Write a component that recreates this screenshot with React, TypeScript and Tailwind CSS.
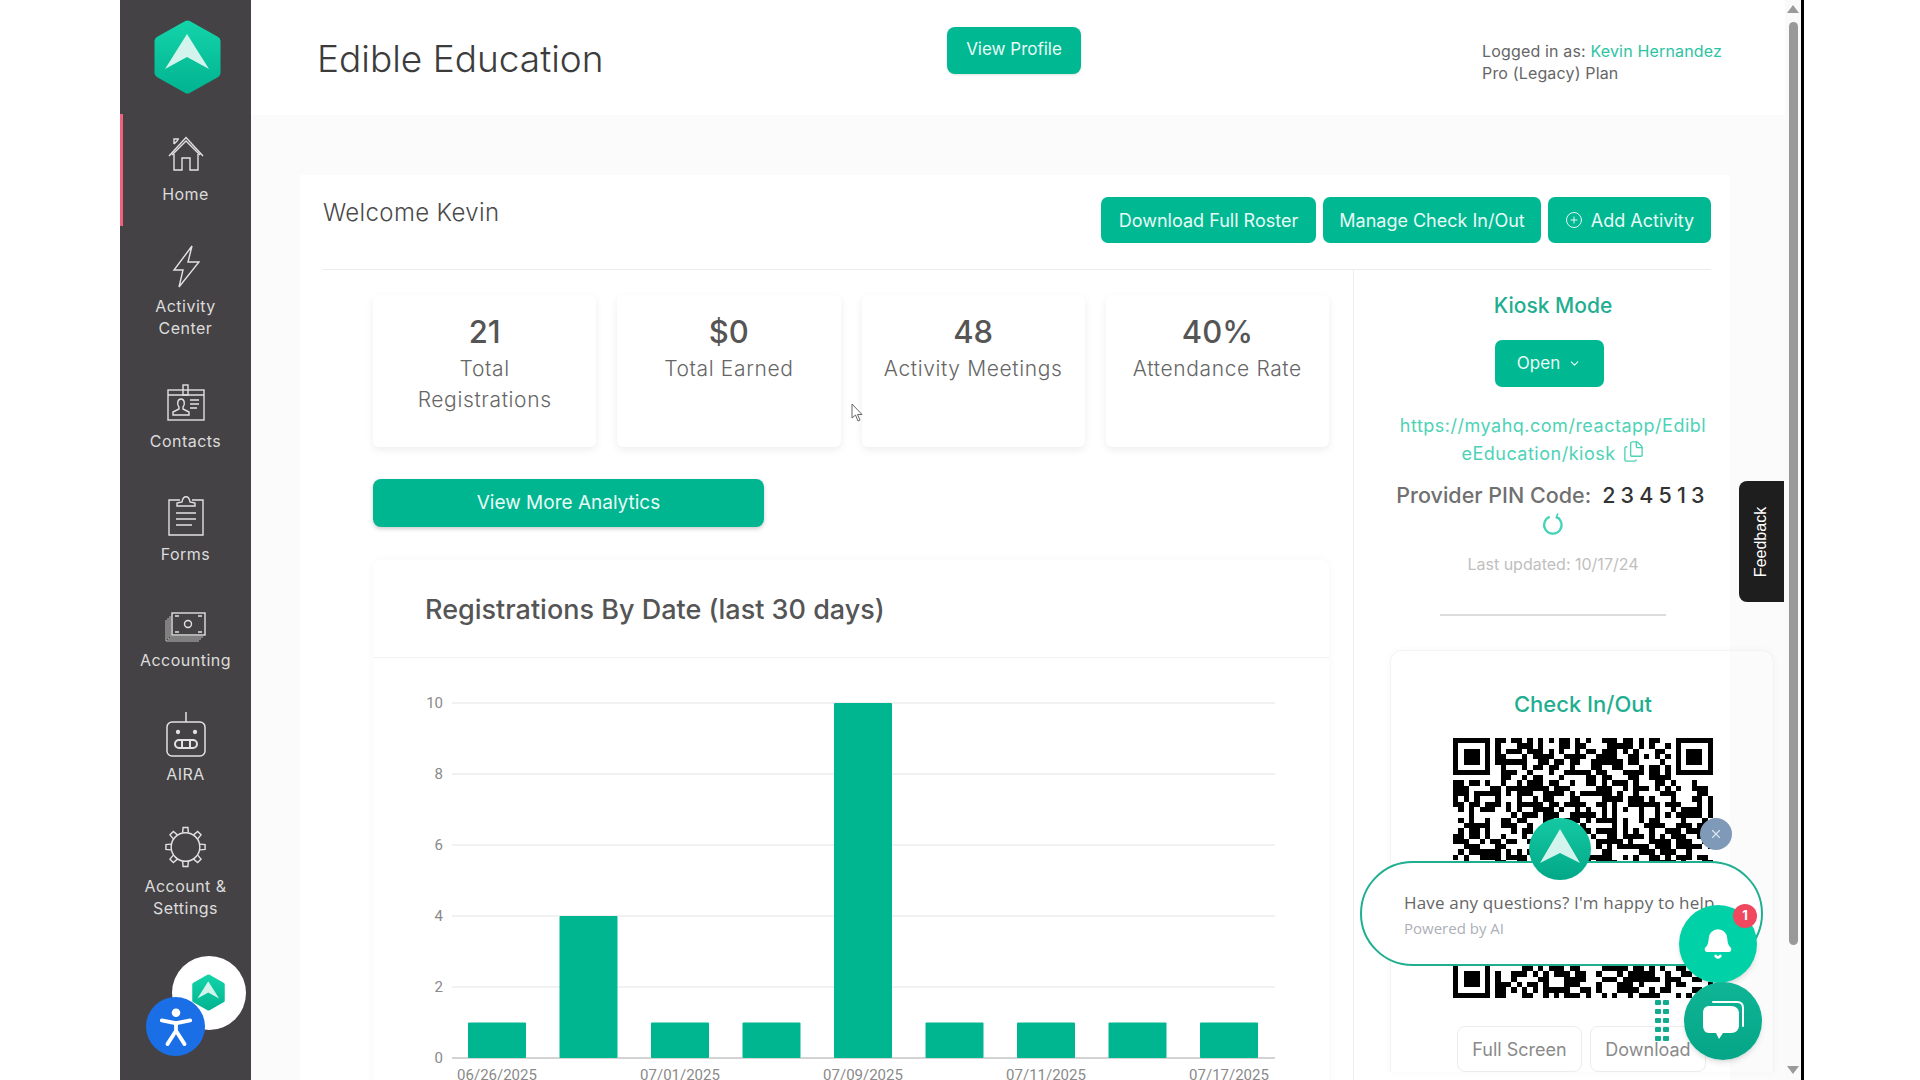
import { Bell, ChevronDown, CirclePlus, Files, X } from 'lucide-react';

const Logo = ({ className }: { className: string }) => (
  <svg viewBox="0 0 67 74" className={className}>
    <defs>
      <linearGradient id="hexFill" x1="0" y1="0" x2="0" y2="1">
        <stop offset="0" stopColor="#12d2a8" />
        <stop offset="1" stopColor="#02b592" />
      </linearGradient>
    </defs>
    <polygon
      points="33.5,5 62,21 62,53 33.5,69 5,53 5,21"
      fill="url(#hexFill)"
      stroke="url(#hexFill)"
      strokeWidth="9"
      strokeLinejoin="round"
    />
    <polygon points="33,14 55,49 33,37 11,49" fill="#d3f4ec" />
  </svg>
);

const HomeIcon = () => (
  <svg viewBox="0 0 36 36" className="h-[36px] w-[36px]" fill="none" stroke="#e2e2e2" strokeWidth="1.4">
    <path d="M1 20 L18 1.5 L35 20 M4 19 L18 5 L32 19" />
    <path d="M6 8 V3 H11 M6 8 L10 4" />
    <path d="M6 18 V34 H14 V22 H22 V34 H30 V18" />
  </svg>
);

const BoltIcon = () => (
  <svg viewBox="0 0 28 43" className="h-[43px] w-[28px]" fill="none" stroke="#e2e2e2" strokeWidth="1.4">
    <path d="M20 1 L2 25 H11 L7 42 L27 17 H16 Z" />
  </svg>
);

const ContactsIcon = () => (
  <svg viewBox="0 0 38 37" className="h-[37px] w-[38px]" fill="none" stroke="#e2e2e2" strokeWidth="1.4">
    <rect x="1" y="6" width="36" height="30" />
    <rect x="16" y="1" width="5" height="10" />
    <path d="M1 11 H37" />
    <path d="M6 31 V28 L12 25 V23 C10 21 10 15 14 15 C18 15 18 21 16 23 V25 L22 28 V31 Z" />
    <path d="M23 16 H32 M23 20 H32 M23 24 H30" />
  </svg>
);

const FormsIcon = () => (
  <svg viewBox="0 0 36 41" className="h-[41px] w-[36px]" fill="none" stroke="#e2e2e2" strokeWidth="1.4">
    <path d="M12 5 H1 V40 H35 V5 H24" />
    <path d="M9 11 H27 V8 L22 7 C21 0 15 0 14 7 L9 8 Z" />
    <path d="M8 18 H28 M8 24 H28 M8 30 H24" />
  </svg>
);

const MoneyIcon = () => (
  <svg viewBox="0 0 41 30" className="h-[30px] w-[41px]" fill="none" stroke="#e2e2e2" strokeWidth="1.4">
    <rect x="7" y="1" width="33" height="22" />
    <circle cx="23" cy="12" r="3.5" />
    <path d="M10 4 H14 M33 4 H37 M10 20 H14 M33 20 H37" />
    <path d="M5 4 V25 H38 M3 6 V27 H36 M1 8 V29 H34" stroke="#bdbdbd" strokeWidth="1" />
  </svg>
);

const RobotIcon = () => (
  <svg viewBox="0 0 40 45" className="h-[45px] w-[40px]" fill="none" stroke="#e2e2e2" strokeWidth="1.5">
    <path d="M20 0 V10" />
    <rect x="1" y="10" width="38" height="34" rx="5" />
    <circle cx="12" cy="20" r="1.4" fill="#e2e2e2" />
    <circle cx="29" cy="20" r="1.4" fill="#e2e2e2" />
    <rect x="9" y="28" width="22" height="8" rx="4" strokeWidth="2" />
    <path d="M16 28 V36 M24 28 V36" strokeWidth="2" />
  </svg>
);

const GearIcon = () => (
  <svg viewBox="0 0 44 44" className="h-[42px] w-[43px]" fill="none" stroke="#e2e2e2" strokeWidth="1.5">
    <circle cx="22" cy="22" r="15" />
    {[0, 45, 90, 135, 180, 225, 270, 315].map((a) => (
      <path key={a} d="M19 7 L19.5 1.5 H24.5 L25 7" transform={`rotate(${a} 22 22)`} />
    ))}
  </svg>
);

const navItems = [
  { label: ['Home'], icon: <HomeIcon />, box: 'h-[112px] pt-[22px] shadow-[inset_3px_0_0_#f0607f]', gap: 'mt-[11px]' },
  { label: ['Activity', 'Center'], icon: <BoltIcon />, box: 'h-[140px] pt-[19px]', gap: 'mt-[7px]' },
  { label: ['Contacts'], icon: <ContactsIcon />, box: 'h-[110px] pt-[18px]', gap: 'mt-[9px]' },
  { label: ['Forms'], icon: <FormsIcon />, box: 'h-[120px] pt-[19px]', gap: 'mt-[7px]' },
  { label: ['Accounting'], icon: <MoneyIcon />, box: 'h-[112px] pt-[16px]', gap: 'mt-[7px]' },
  { label: ['AIRA'], icon: <RobotIcon />, box: 'h-[113px] pt-[4px]', gap: 'mt-[6px]' },
  { label: ['Account &', 'Settings'], icon: <GearIcon />, box: 'h-[110px] pt-[5px]', gap: 'mt-[7px]' },
];

const stats = [
  { value: '21', label: ['Total', 'Registrations'] },
  { value: '$0', label: ['Total Earned'] },
  { value: '48', label: ['Activity Meetings'] },
  { value: '40%', label: ['Attendance Rate'] },
];

const bars = [1, 4, 1, 1, 10, 1, 1, 1, 1];
const xLabels = ['06/26/2025', '07/01/2025', '07/09/2025', '07/11/2025', '07/17/2025'];

// fake QR matrix, just needs to read as a code
const QR_SIZE = 49;
const inFinder = (x: number, y: number, ox: number, oy: number) =>
  x >= ox - 1 && x <= ox + 7 && y >= oy - 1 && y <= oy + 7;

const qrCell = (x: number, y: number) => {
  const origins = [
    [0, 0],
    [QR_SIZE - 7, 0],
    [0, QR_SIZE - 7],
  ];
  for (const [ox, oy] of origins) {
    if (inFinder(x, y, ox, oy)) {
      const dx = x - ox;
      const dy = y - oy;
      if (dx < 0 || dy < 0 || dx > 6 || dy > 6) return false;
      if (dx === 0 || dy === 0 || dx === 6 || dy === 6) return true;
      return dx >= 2 && dx <= 4 && dy >= 2 && dy <= 4;
    }
  }
  const h = Math.sin(x * 12.9898 + y * 78.233 + (x >> 2) * 3.1 + (y >> 2) * 5.7) * 43758.5453;
  return h - Math.floor(h) > 0.47;
};

const QrCode = () => {
  const cells: { x: number; y: number }[] = [];
  for (let y = 0; y < QR_SIZE; y++) {
    for (let x = 0; x < QR_SIZE; x++) {
      if (qrCell(x, y)) cells.push({ x, y });
    }
  }
  return (
    <svg viewBox={`0 0 ${QR_SIZE} ${QR_SIZE}`} className="h-[262px] w-[260px]" shapeRendering="crispEdges">
      {cells.map((c) => (
        <rect key={`${c.x}-${c.y}`} x={c.x} y={c.y} width="1" height="1" fill="#000" />
      ))}
    </svg>
  );
};

const Sidebar = () => (
  <aside className="relative w-[131px] shrink-0 bg-[#444245]">
    <div className="flex h-[114px] justify-center pt-[20px]">
      <Logo className="ml-[4px] h-[74px] w-[67px]" />
    </div>
    {navItems.map((item) => (
      <div key={item.label[0]} className={`flex flex-col items-center ${item.box}`}>
        {item.icon}
        <div className={`text-center text-[16px] leading-[22px] tracking-[0.03em] text-[#dcdcdc] ${item.gap}`}>
          {item.label.map((l) => (
            <div key={l}>{l}</div>
          ))}
        </div>
      </div>
    ))}
    {/* floating widgets */}
    <div className="absolute left-[52px] top-[956px] flex h-[74px] w-[74px] items-center justify-center rounded-full bg-white">
      <Logo className="mb-[2px] mr-[2px] h-[37px] w-[33px]" />
    </div>
    <div className="absolute left-[26px] top-[997px] flex h-[59px] w-[59px] items-center justify-center rounded-full bg-[#1a6fe6]">
      <svg viewBox="0 0 40 44" className="h-[42px] w-[38px]" fill="none" stroke="#fff" strokeWidth="4" strokeLinecap="round">
        <circle cx="20" cy="7" r="4.5" fill="#fff" stroke="none" />
        <path d="M5 15 L20 18 L35 15" />
        <path d="M20 18 V26 L11 40 M20 26 L29 40" />
      </svg>
    </div>
  </aside>
);

const Header = () => (
  <header className="flex h-[115px] shrink-0 bg-white">
    <div className="w-[696px] pl-[66px] pt-[36px] text-[37px] font-light leading-[46px] text-[#3c3c3c]">
      Edible Education
    </div>
    <button className="mt-[27px] h-[47px] w-[134px] rounded-[8px] bg-[#00b892] pb-[2px] text-[17px] text-[#e8fbf6] shadow-sm">
      View Profile
    </button>
    <div className="ml-[401px] pt-[40px] text-[16px] leading-[22px] tracking-[0.01em] text-[#666]">
      <div>
        Logged in as: <span className="text-[#2cc3a3]">Kevin Hernandez</span>
      </div>
      <div>Pro (Legacy) Plan</div>
    </div>
  </header>
);

const GreenButton = ({ width, children }: { width: string; children: React.ReactNode }) => (
  <button className={`flex h-[46px] items-center justify-center gap-[8px] rounded-[7px] bg-[#00b892] text-[18px] text-[#e8fbf6] ${width}`}>
    {children}
  </button>
);

const Chart = () => (
  <svg width="957" height="430" className="block [font-family:Roboto,sans-serif]">
    {[10, 8, 6, 4, 2, 0].map((v, i) => {
      const y = 45 + i * 71;
      return (
        <g key={v}>
          <line x1="79" x2="902" y1={y} y2={y} stroke={v === 0 ? '#a8a8a8' : '#ececee'} strokeWidth={v === 0 ? 1.2 : 1.5} />
          <text x="70" y={y + 5} textAnchor="end" fontSize="15" fill="#8a8a8a">
            {v}
          </text>
        </g>
      );
    })}
    {bars.map((v, i) => {
      const h = v * 35.5;
      return <rect key={i} x={95 + i * 91.5} y={400 - h} width="58" height={h} rx="1" fill="#00b690" />;
    })}
    {xLabels.map((l, i) => (
      <text key={l} x={124 + i * 183} y={422} textAnchor="middle" fontSize="15" fill="#8a8a8a">
        {l}
      </text>
    ))}
  </svg>
);

const KioskColumn = () => (
  <div className="w-[398px] shrink-0">
    <div className="flex flex-col items-center pt-[22px]">
      <div className="text-[21px] font-medium leading-[28px] text-[#1fae90]">Kiosk Mode</div>
      <button className="ml-[-8px] mt-[20px] flex h-[47px] w-[109px] items-center justify-center gap-[8px] rounded-[7px] bg-[#00b892] text-[17px] text-[#e8fbf6]">
        Open <ChevronDown size={13} />
      </button>
      <div className="mt-[25px] text-center text-[18px] leading-[28px] tracking-[0.028em] text-[#4ed2b6]">
        <div>https://myahq.com/reactapp/Edibl</div>
        <div className="flex items-center justify-center gap-[6px]">
          eEducation/kiosk <Files size={23} strokeWidth={1.4} className="mb-[5px]" />
        </div>
      </div>
      <div className="mt-[13px] flex items-center gap-[11px] text-[21.5px] font-medium leading-[28px] text-[#707070]">
        <span>Provider PIN Code:</span>
        <span className="tracking-[0.24em] text-[#333]">234513</span>
      </div>
      <svg viewBox="0 0 22 22" className="mt-[4px] h-[24px] w-[24px]" fill="none" stroke="#43d3b6" strokeWidth="2">
        <path d="M8 3.5 A8 8 0 1 0 14 3.6" />
        <path d="M15.5 0.5 L14 4 L17.5 5" strokeWidth="1.5" />
      </svg>
      <div className="mt-[17px] text-[16px] leading-[20px] text-[#c0c0c0]">Last updated: 10/17/24</div>
      <div className="mt-[40px] h-[2px] w-[226px] bg-[#dcdcdc]" />
    </div>
    <div className="ml-[36px] mt-[34px] w-[384px] rounded-t-[12px] border border-b-0 border-[#f3f3f3] shadow-[0_0_8px_rgba(0,0,0,0.03)]">
      <div className="flex flex-col items-center pt-[38px]">
        <div className="ml-[2px] text-[22px] font-medium leading-[30px] text-[#1fae90]">Check In/Out</div>
        <div className="ml-[2px] mt-[18px]">
          <QrCode />
        </div>
        <div className="ml-[10px] mt-[27px] flex w-[260px] gap-[8px]">
          <button className="h-[46px] w-[125px] shrink-0 rounded-[8px] border border-[#ececec] text-[18px] text-[#8a8a8a]">Full Screen</button>
          <button className="h-[46px] w-[116px] shrink-0 rounded-[8px] border border-[#ececec] text-[18px] text-[#8a8a8a]">Download</button>
        </div>
      </div>
    </div>
  </div>
);

const ChatOverlay = () => (
  <>
    <div className="absolute left-[1109px] top-[861px] h-[105px] w-[403px] rounded-full border-2 border-[#1fae90] bg-white pl-[42px] pt-[28px] [font-family:'Open_Sans',sans-serif]">
      <div className="whitespace-nowrap text-[17px] leading-[24px] tracking-[0.01em] text-[#666]">Have any questions? I'm happy to help</div>
      <div className="mt-[3px] text-[15px] leading-[20px] text-[#adb0b8]">Powered by AI</div>
    </div>
    <div className="absolute left-[1278px] top-[818px] flex h-[62px] w-[62px] items-center justify-center rounded-full bg-gradient-to-b from-[#14c9a3] to-[#02a888]">
      <svg viewBox="0 0 44 40" className="mb-[4px] h-[40px] w-[44px]">
        <polygon points="22,2 42,36 22,26 2,36" fill="#d3f4ec" />
      </svg>
    </div>
    <div className="absolute left-[1449px] top-[818px] flex h-[32px] w-[32px] items-center justify-center rounded-full bg-[#7f9ab8]">
      <X size={14} className="text-[#dbe6f3]" />
    </div>
    <div className="absolute left-[1428px] top-[905px] flex h-[78px] w-[78px] items-center justify-center rounded-full bg-[#00d1a6] shadow-md">
      <Bell size={32} fill="#fff" className="text-white" />
    </div>
    <div className="absolute left-[1482px] top-[904px] flex h-[24px] w-[24px] items-center justify-center rounded-full bg-[#f0485f] text-[13px] font-bold text-white">
      1
    </div>
    <div className="absolute left-[1404px] top-[1000px] grid grid-cols-2 gap-x-[2px] gap-y-[4px]">
      {Array.from({ length: 10 }).map((_, i) => (
        <div key={i} className="h-[5px] w-[6px] rounded-[1px] bg-[#11ab8d]" />
      ))}
    </div>
    <div className="absolute left-[1433px] top-[982px] flex h-[78px] w-[78px] items-center justify-center rounded-full bg-gradient-to-b from-[#0fb596] to-[#05a587] shadow-md">
      <svg viewBox="0 0 44 42" className="h-[42px] w-[44px]">
        <path d="M12 2 H36 C40 2 42 4 42 8 V26" fill="none" stroke="#fff" strokeWidth="2" strokeLinecap="round" />
        <path d="M8 6 H30 C35 6 38 9 38 13 V25 C38 30 35 33 30 33 H22 L18 39 L15 33 H8 C4 33 2 30 2 25 V13 C2 9 4 6 8 6 Z" fill="#fff" />
      </svg>
    </div>
    {/* feedback tab */}
    <div className="absolute left-[1488px] top-[481px] flex h-[121px] w-[45px] items-center justify-center rounded-l-[8px] bg-[#1e1e1e]">
      <span className="-rotate-90 text-[16px] text-white [font-family:'Liberation_Sans',sans-serif]">Feedback</span>
    </div>
    {/* mouse pointer */}
    <svg viewBox="0 0 12 20" className="absolute left-[600px] top-[403px] h-[20px] w-[12px]" fill="#fff" stroke="#666" strokeWidth="1">
      <path d="M1 1 V15 L4.5 12 L7 18 L9 17 L6.5 11.5 H11 Z" />
    </svg>
  </>
);

const Scrollbar = () => (
  <div className="flex w-[16px] shrink-0 flex-col items-center bg-[#fafafa]">
    <div className="mt-[5px] h-0 w-0 border-x-[6px] border-b-[8px] border-x-transparent border-b-[#9a9a9a]" />
    <div className="mt-[9px] h-[923px] w-[9px] rounded-full bg-[#999]" />
    <div className="mt-[121px] h-0 w-0 border-x-[6px] border-t-[8px] border-x-transparent border-t-[#9a9a9a]" />
  </div>
);

export default function App() {
  return (
    <div className="flex h-[1080px] w-[1920px] overflow-hidden bg-white text-[#555] [font-family:Inter,sans-serif]">
      <div className="w-[120px] shrink-0" />
      <Sidebar />
      <main className="relative flex w-[1534px] shrink-0 flex-col overflow-hidden bg-[#fbfbfb]">
        <Header />
        <div className="ml-[49px] mt-[60px] w-[1430px] bg-white pl-[23px] pr-[19px]">
          <div className="flex h-[95px] items-start justify-between border-b border-[#ececee] pt-[22px]">
            <div className="pt-[1px] text-[24px] font-light leading-[30px] tracking-[0.015em] text-[#4a4a4a]">Welcome Kevin</div>
            <div className="flex gap-[7px]">
              <GreenButton width="w-[215px]">Download Full Roster</GreenButton>
              <GreenButton width="w-[218px]">Manage Check In/Out</GreenButton>
              <GreenButton width="w-[163px]">
                <CirclePlus size={18} strokeWidth={1.3} /> Add Activity
              </GreenButton>
            </div>
          </div>
          <div className="flex">
            <div className="w-[1031px] shrink-0 border-r border-[#eeeef0] pl-[50px] pr-[24px]">
              <div className="mt-[25px] grid grid-cols-4 gap-x-[21px]">
                {stats.map((s) => (
                  <div key={s.value} className="flex h-[152px] flex-col items-center rounded-[6px] bg-white pt-[17px] shadow-[0_3px_8px_rgba(0,0,0,0.07)]">
                    <div className="text-[31px] font-medium leading-[40px] text-[#555]">{s.value}</div>
                    <div className="mt-[1px] text-center text-[21px] font-light leading-[31px] tracking-[0.03em] text-[#666]">
                      {s.label.map((l) => (
                        <div key={l}>{l}</div>
                      ))}
                    </div>
                  </div>
                ))}
              </div>
              <button className="mt-[32px] h-[48px] w-[391px] rounded-[8px] bg-[#00b690] text-[19px] text-[#e8fbf6] shadow-[0_2px_4px_rgba(0,0,0,0.2)]">
                View More Analytics
              </button>
              <div className="mt-[33px] rounded-t-[8px] shadow-[0_0_8px_rgba(0,0,0,0.04)]">
                <div className="h-[98px] border-b border-[#f2f2f2] pl-[52px] pt-[32px] text-[27px] font-medium leading-[36px] text-[#555]">
                  Registrations By Date (last 30 days)
                </div>
                <Chart />
              </div>
            </div>
            <KioskColumn />
          </div>
        </div>
        <ChatOverlay />
      </main>
      <Scrollbar />
      <div className="w-[3px] shrink-0 bg-black" />
    </div>
  );
}
